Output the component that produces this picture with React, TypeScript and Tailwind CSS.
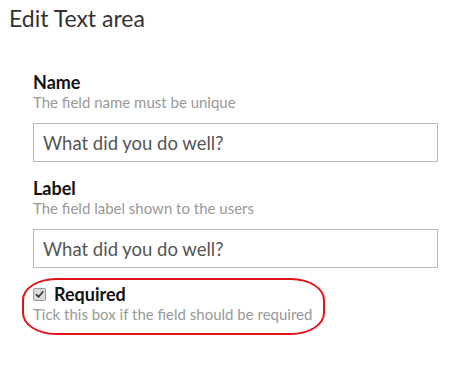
export default function App() {
  return (
    <div className="w-[455px] h-[371px] bg-white font-['Lato','Noto_Sans',sans-serif] overflow-hidden">
      <div className="pl-[9px] pt-1">
        <h1 className="text-[23px] leading-[28px] text-[#333]">Edit Text area</h1>
      </div>

      <div className="ml-[33px] w-[405px] mt-10 flex flex-col gap-4">
        {/* Name */}
        <div>
          <div className="text-[18px] leading-5 font-bold text-[#111]">Name</div>
          <div className="text-[15px] leading-5 text-[#999]">The field name must be unique</div>
          <input
            readOnly
            value="What did you do well?"
            className="mt-[11px] block w-full h-[39px] border border-[#bbb] px-[9px] text-[18.5px] text-[#555] outline-none"
          />
        </div>

        {/* Label */}
        <div>
          <div className="text-[18px] leading-5 font-bold text-[#111]">Label</div>
          <div className="text-[15px] leading-5 text-[#999]">The field label shown to the users</div>
          <input
            readOnly
            value="What did you do well?"
            className="mt-[11px] block w-full h-[39px] border border-[#bbb] px-[9px] text-[18.5px] text-[#555] outline-none"
          />
        </div>

        {/* Required */}
        <div className="relative">
          <div className="flex items-center h-5">
            <span className="w-[13px] h-[13px] rounded-[2px] border border-[#9a9a9a] bg-[#dcdcdc] flex items-center justify-center">
              <svg viewBox="0 0 10 10" className="w-[9px] h-[9px]">
                <path d="M1.5 5.2 L4 7.6 L8.6 2.2" fill="none" stroke="#333" strokeWidth="1.8" strokeLinecap="round" strokeLinejoin="round" />
              </svg>
            </span>
            <span className="ml-2 text-[18px] leading-5 font-bold text-[#111]">Required</span>
          </div>
          <div className="text-[15px] leading-5 text-[#999]">Tick this box if the field should be required</div>

          {/* annotation */}
          <div className="absolute left-[-11px] top-[-6px] w-[303px] h-[57px] border-[2.5px] border-[#e3141c] rounded-[34px/22px] pointer-events-none" />
        </div>
      </div>
    </div>
  )
}
